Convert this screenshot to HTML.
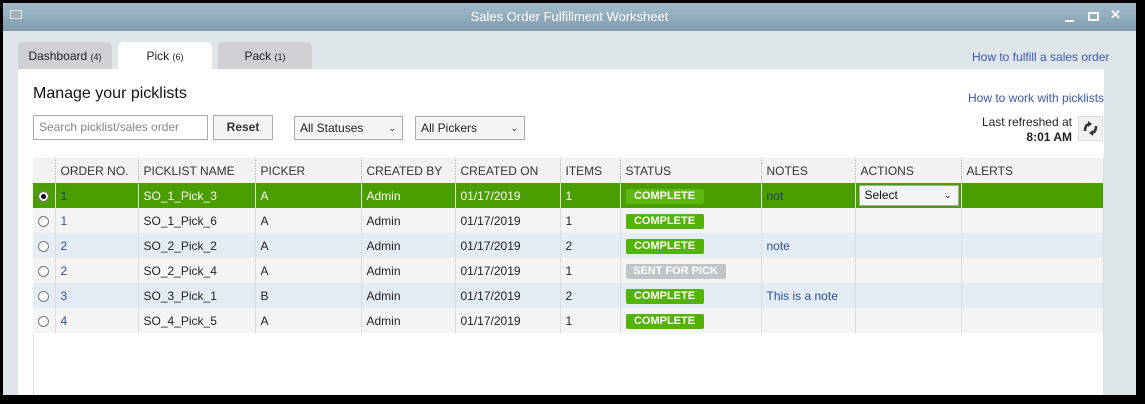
<!DOCTYPE html><html><head><style>
*{box-sizing:border-box;margin:0;padding:0}
body{width:1145px;height:404px;background:#000;font-family:"Liberation Sans",sans-serif;font-size:12px;color:#222;position:relative;overflow:hidden}
.abs{position:absolute}
.title{left:3px;top:3px;width:1133px;height:28px;background:linear-gradient(#a3bccb,#7f9cae);color:#fff;font-size:13px;text-align:center;line-height:28px}
.body{left:3px;top:31px;width:1133px;height:364px;background:#dfe6ea}
.tab{top:42px;height:28px;background:#cfd0d4;border-radius:5px 5px 0 0;text-align:center;line-height:28px;font-size:12px;color:#222}
.tab small{font-size:9px}
.panel{left:18px;top:69px;width:1086px;height:326px;background:#fff}
a{color:#3a58b5;text-decoration:none}
.inp{border:1px solid #aaa;background:#fff;height:25px;line-height:23px;padding-left:5px;font-size:12px}
table{position:absolute;left:33px;top:158px;border-collapse:collapse;table-layout:fixed}
th{height:25px;background:#f2f2f2;text-align:left;font-weight:normal;font-size:12px;color:#333;padding-left:5px;border-left:1px dotted #bbb}
td{height:25px;padding-left:5px;border-left:1px solid #ddd;font-size:12px;color:#222}
td.o{color:#2a4f9b}
tr.g td{background:#4a9e00;color:#fff}
tr.g td.o{color:#1d3f7a}
tr.a td{background:#f4f4f4}tr.b td{background:#e3ebf5}
.bd{display:inline-block;background:#52b400;color:#fff;font-size:11px;font-weight:bold;width:78px;text-align:center;height:15px;line-height:15px;border-radius:2px}
.gr{background:#c0c3c7;width:100px}
.rad{display:inline-block;width:11px;height:11px;border:1px solid #777;border-radius:50%;background:#fff;vertical-align:middle}
.n{color:#2a4f9b}
</style></head><body>
<div class="abs title">Sales Order Fulfillment Worksheet</div>
<div class="abs" style="left:10px;top:10px;width:12px;height:9px;border:1px solid #e8e8e8;background:#9fb0ba"></div>
<div class="abs" style="left:1065px;top:20px;width:9px;height:2px;background:#fff"></div>
<div class="abs" style="left:1088px;top:12px;width:11px;height:9px;border:2px solid #fff"></div>
<div class="abs" style="left:1110px;top:7px;color:#fff;font-size:13px;font-weight:bold">✕</div>
<div class="abs body"></div>
<div class="abs tab" style="left:18px;width:94px">Dashboard <small>(4)</small></div>
<div class="abs tab" style="left:118px;width:94px;background:#fff">Pick <small>(6)</small></div>
<div class="abs tab" style="left:218px;width:94px">Pack <small>(1)</small></div>
<a class="abs" style="left:972px;top:50px;font-size:12px">How to fulfill a sales order</a>
<div class="abs panel"></div>
<div class="abs" style="left:33px;top:85px;font-size:16px;color:#111">Manage your picklists</div>
<a class="abs" style="left:968px;top:91px">How to work with picklists</a>
<div class="abs inp" style="left:33px;top:115px;width:175px;color:#888">Search picklist/sales order</div>
<div class="abs inp" style="left:213px;top:115px;width:60px;text-align:center;padding:0;background:#f4f4f4;color:#333;font-weight:bold">Reset</div>
<div class="abs inp" style="left:294px;top:116px;width:109px;height:24px;background:#f4f4f4">All Statuses<span style="position:absolute;right:6px;font-size:9px">⌄</span></div>
<div class="abs inp" style="left:415px;top:116px;width:110px;height:24px;background:#f4f4f4">All Pickers<span style="position:absolute;right:6px;font-size:9px">⌄</span></div>
<div class="abs" style="left:960px;top:115px;width:112px;text-align:right;line-height:15px">Last refreshed at<br><b>8:01 AM</b></div>
<div class="abs" style="left:1078px;top:116px;width:25px;height:25px;background:#f2f2f2;border:1px solid #ddd">
<svg width="23" height="23" viewBox="0 0 23 23"><path d="M11 7 C7 7 6 10 6 14" stroke="#333" stroke-width="2.5" fill="none"/><path d="M9 4 L13 7 L9 10Z" fill="#333"/><path d="M12 16 C16 16 17 13 17 9" stroke="#333" stroke-width="2.5" fill="none"/><path d="M14 13 L10 16 L14 19Z" fill="#333"/></svg></div>
<table>
<colgroup><col width="22"><col width="83"><col width="117"><col width="106"><col width="94"><col width="105"><col width="60"><col width="141"><col width="94"><col width="106"><col width="143"></colgroup>
<tr><th style="border:0"></th><th>ORDER NO.</th><th>PICKLIST NAME</th><th>PICKER</th><th>CREATED BY</th><th>CREATED ON</th><th>ITEMS</th><th>STATUS</th><th>NOTES</th><th>ACTIONS</th><th>ALERTS</th></tr>
<tr class="g"><td style="border:0"><span class="rad" style="background:#fff;box-shadow:inset 0 0 0 2px #fff,inset 0 0 0 5px #000"></span></td><td class="o">1</td><td>SO_1_Pick_3</td><td>A</td><td>Admin</td><td>01/17/2019</td><td>1</td><td><span class="bd" style="background:#5cb80e">COMPLETE</span></td><td class="o">not</td><td style="padding-left:3px"><div class="inp" style="width:100px;height:21px;line-height:19px;background:#f4f4f4;color:#111;position:relative">Select<span style="position:absolute;right:6px;font-size:9px">⌄</span></div></td><td></td></tr>
<tr class="a"><td style="border:0"><span class="rad"></span></td><td class="o">1</td><td>SO_1_Pick_6</td><td>A</td><td>Admin</td><td>01/17/2019</td><td>1</td><td><span class="bd">COMPLETE</span></td><td></td><td></td><td></td></tr>
<tr class="b"><td style="border:0"><span class="rad"></span></td><td class="o">2</td><td>SO_2_Pick_2</td><td>A</td><td>Admin</td><td>01/17/2019</td><td>2</td><td><span class="bd">COMPLETE</span></td><td class="n">note</td><td></td><td></td></tr>
<tr class="a"><td style="border:0"><span class="rad"></span></td><td class="o">2</td><td>SO_2_Pick_4</td><td>A</td><td>Admin</td><td>01/17/2019</td><td>1</td><td><span class="bd gr">SENT FOR PICK</span></td><td></td><td></td><td></td></tr>
<tr class="b"><td style="border:0"><span class="rad"></span></td><td class="o">3</td><td>SO_3_Pick_1</td><td>B</td><td>Admin</td><td>01/17/2019</td><td>2</td><td><span class="bd">COMPLETE</span></td><td class="n">This is a note</td><td></td><td></td></tr>
<tr class="a"><td style="border:0"><span class="rad"></span></td><td class="o">4</td><td>SO_4_Pick_5</td><td>A</td><td>Admin</td><td>01/17/2019</td><td>1</td><td><span class="bd">COMPLETE</span></td><td></td><td></td><td></td></tr>
</table>
<div class="abs" style="left:33px;top:333px;width:1px;height:62px;background:#ddd"></div>
<div class="abs" style="left:1103px;top:158px;width:1px;height:237px;background:#ddd"></div>
</body></html>
